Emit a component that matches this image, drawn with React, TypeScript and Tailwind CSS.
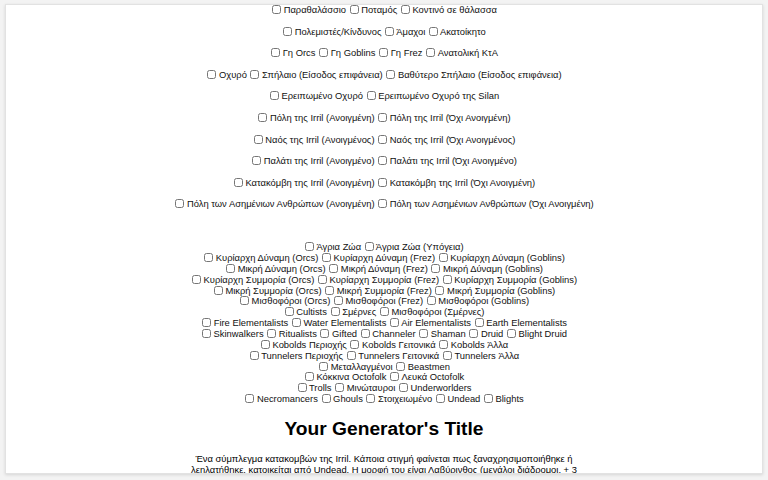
import React from 'react';

const topRows: string[][] = [
  ['Παραθαλάσσιο', 'Ποταμός', 'Κοντινό σε θάλασσα'],
  ['Πολεμιστές/Κίνδυνος', 'Άμαχοι', 'Ακατοίκητο'],
  ['Γη Orcs', 'Γη Goblins', 'Γη Frez', 'Ανατολική ΚτΑ'],
  ['Οχυρό', 'Σπήλαιο (Είσοδος επιφάνεια)', 'Βαθύτερο Σπήλαιο (Είσοδος επιφάνεια)'],
  ['Ερειπωμένο Οχυρό', 'Ερειπωμένο Οχυρό της Silan'],
  ['Πόλη της Irril (Ανοιγμένη)', 'Πόλη της Irril (Όχι Ανοιγμένη)'],
  ['Ναός της Irril (Ανοιγμένος)', 'Ναός της Irril (Όχι Ανοιγμένος)'],
  ['Παλάτι της Irril (Ανοιγμένο)', 'Παλάτι της Irril (Όχι Ανοιγμένο)'],
  ['Κατακόμβη της Irril (Ανοιγμένη)', 'Κατακόμβη της Irril (Όχι Ανοιγμένη)'],
  ['Πόλη των Ασημένιων Ανθρώπων (Ανοιγμένη)', 'Πόλη των Ασημένιων Ανθρώπων (Όχι Ανοιγμένη)'],
];

const encounterRows: string[][] = [
  ['Άγρια Ζώα', 'Άγρια Ζώα (Υπόγεια)'],
  ['Κυρίαρχη Δύναμη (Orcs)', 'Κυρίαρχη Δύναμη (Frez)', 'Κυρίαρχη Δύναμη (Goblins)'],
  ['Μικρή Δύναμη (Orcs)', 'Μικρή Δύναμη (Frez)', 'Μικρή Δύναμη (Goblins)'],
  ['Κυρίαρχη Συμμορία (Orcs)', 'Κυρίαρχη Συμμορία (Frez)', 'Κυρίαρχη Συμμορία (Goblins)'],
  ['Μικρή Συμμορία (Orcs)', 'Μικρή Συμμορία (Frez)', 'Μικρή Συμμορία (Goblins)'],
  ['Μισθοφόροι (Orcs)', 'Μισθοφόροι (Frez)', 'Μισθοφόροι (Goblins)'],
  ['Cultists', 'Σμέρνες', 'Μισθοφόροι (Σμέρνες)'],
  ['Fire Elementalists', 'Water Elementalists', 'Air Elementalists', 'Earth Elementalists'],
  ['Skinwalkers', 'Ritualists', 'Gifted', 'Channeler', 'Shaman', 'Druid', 'Blight Druid'],
  ['Kobolds Περιοχής', 'Kobolds Γειτονικά', 'Kobolds Άλλα'],
  ['Tunnelers Περιοχής', 'Tunnelers Γειτονικά', 'Tunnelers Άλλα'],
  ['Μεταλλαγμένοι', 'Beastmen'],
  ['Κόκκινα Octofolk', 'Λευκά Octofolk'],
  ['Trolls', 'Μινώταυροι', 'Underworlders'],
  ['Necromancers', 'Ghouls', 'Στοιχειωμένο', 'Undead', 'Blights'],
];

function CheckRow({ items }: { items: string[] }) {
  return (
    <div className="whitespace-nowrap">
      {items.map((label, i) => (
        <React.Fragment key={label}>
          {i > 0 && ' '}
          <label>
            <input
              type="checkbox"
              className="m-0 ml-px h-[9px] w-[9px] align-[-1px]"
            />{' '}
            {label}
          </label>
        </React.Fragment>
      ))}
    </div>
  );
}

export default function App() {
  return (
    <div className="h-[480px] w-[768px] overflow-hidden bg-[#f3f3f3] px-[5px] pt-[4px] font-['Liberation_Sans',Arial,sans-serif] text-[#111]">
      <div className="h-[470px] overflow-hidden border border-[#e2e2e2] bg-white text-center shadow-[0_1px_3px_rgba(0,0,0,0.12)]">
        {/* settings — scrolled partway */}
        <div className="flex flex-col gap-[10.8px] text-[9.4px] leading-[10.8px]">
          {topRows.map((r) => (
            <CheckRow key={r[0]} items={r} />
          ))}
        </div>

        {/* encounter types */}
        <div className="mt-[32px] text-[9.4px] leading-[10.86px]">
          {encounterRows.map((r) => (
            <CheckRow key={r.join('|')} items={r} />
          ))}
        </div>

        <h1 className="mt-[13px] text-[19.2px] font-bold leading-[22px] text-black">
          Your Generator's Title
        </h1>

        <p className="mx-auto mt-[13px] max-w-[400px] text-[9.4px] leading-[11px] text-black">
          Ένα σύμπλεγμα κατακομβών της Irril. Κάποια στιγμή φαίνεται πως ξαναχρησιμοποιήθηκε ή
          λεηλατήθηκε. κατοικείται από Undead. Η μορφή του είναι Λαβύρινθος (μεγάλοι διάδρομοι, + 3
          μικρά δωμάτια). Στο κέντρο βρίσκεται μια αίθουσα με έναν παλιό βωμό.
        </p>
      </div>
    </div>
  );
}
